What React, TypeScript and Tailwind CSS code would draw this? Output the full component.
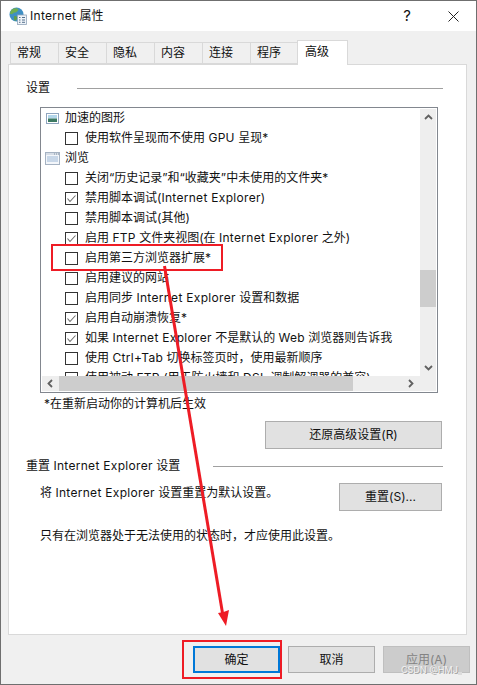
const font = { fontFamily: 'Inter,"Noto Sans CJK SC",sans-serif' };

function T({ s }: { s: string }) {
  const parts = s.split(/([A-Za-z+][A-Za-z+ ]*[A-Za-z+]|[A-Za-z])/);
  return (
    <>
      {parts.map((p, i) =>
        i % 2 === 1 ? (
          <span key={i} className="tracking-[0.3px]">
            {p}
          </span>
        ) : (
          p
        )
      )}
    </>
  );
}

function GlobeIcon() {
  return (
    <svg width="18" height="18" viewBox="0 0 18 18">
      <circle cx="7.500" cy="7.500" r="7" fill="#3f8fc4" />
      <path d="M3 2.500c2-1.500 5-1.800 6-.5 1 1.300-.5 2-1.500 3-.8.800-2.500.300-3.500 1.500C3 7.500 2 7 1 7c0-2 1-3.500 2-4.500z" fill="#6fae4f" />
      <path d="M6 9c1.500 0 2.500 1 2 2.500-.3 1-1 2-2 2.500-1-1-1.500-3-.8-5z" fill="#5f9e4a" />
      <rect x="8.500" y="8" width="9" height="9.500" fill="#eef3f8" stroke="#8fa3b8" strokeWidth="0.800" />
      <path d="M10 10.500h1.500M13 10.500h3M10 13h1.500M13 13h3M10 15.300h1.500M13 15.300h3" stroke="#55708c" strokeWidth="1" />
    </svg>
  );
}

function GraphicsIcon() {
  return (
    <svg width="13" height="13" viewBox="0 0 13 13" className="shrink-0">
      <rect x="0.500" y="1.500" width="12" height="10" fill="#fff" stroke="#8fa5bf" />
      <rect x="2" y="3" width="9" height="3.500" fill="#b3d6ea" />
      <rect x="2" y="6.500" width="9" height="3.500" fill="#3d7a62" />
    </svg>
  );
}

function BrowseIcon() {
  return (
    <svg width="15" height="13" viewBox="0 0 15 13" className="shrink-0">
      <rect x="0.500" y="0.500" width="14" height="12" fill="#f3f6fa" stroke="#a5b2c2" />
      <rect x="1" y="1" width="13" height="2" fill="#d6dde6" />
      <path d="M9 2h1M11 2h1M13 2h1" stroke="#8090a0" strokeWidth="1" />
      <path d="M2 5h11M2 7h11M2 9h11" stroke="#9db8d6" strokeWidth="1" />
    </svg>
  );
}

function Check({ on }: { on?: boolean }) {
  return (
    <span className="w-[13px] h-[13px] border border-[#333333] bg-white shrink-0 flex items-center justify-center">
      {on && (
        <svg width="11" height="11" viewBox="0 0 11 11">
          <path d="M1.500 5.500 4 8.500 9.500 2.500" fill="none" stroke="#6e6e6e" strokeWidth="1.100" />
        </svg>
      )}
    </span>
  );
}

const rows: { t: string; kind: "g" | "b" | "c"; on?: boolean }[] = [
  { t: "加速的图形", kind: "g" },
  { t: "使用软件呈现而不使用 GPU 呈现*", kind: "c" },
  { t: "浏览", kind: "b" },
  { t: "关闭“历史记录”和“收藏夹”中未使用的文件夹*", kind: "c" },
  { t: "禁用脚本调试(Internet Explorer)", kind: "c", on: true },
  { t: "禁用脚本调试(其他)", kind: "c" },
  { t: "启用 FTP 文件夹视图(在 Internet Explorer 之外)", kind: "c", on: true },
  { t: "启用第三方浏览器扩展*", kind: "c" },
  { t: "启用建议的网站", kind: "c" },
  { t: "启用同步 Internet Explorer 设置和数据", kind: "c" },
  { t: "启用自动崩溃恢复*", kind: "c", on: true },
  { t: "如果 Internet Explorer 不是默认的 Web 浏览器则告诉我", kind: "c", on: true },
  { t: "使用 Ctrl+Tab 切换标签页时，使用最新顺序", kind: "c" },
  { t: "使用被动 FTP (用于防火墙和 DSL 调制解调器的兼容)", kind: "c" },
];

const tabs = ["常规", "安全", "隐私", "内容", "连接", "程序"];

function Chevron({ d }: { d: string }) {
  return (
    <svg width="9" height="9" viewBox="0 0 9 9">
      <path d={d} fill="none" stroke="#606060" strokeWidth="1.800" />
    </svg>
  );
}

export default function App() {
  return (
    <div
      className="relative w-[477px] h-[685px] overflow-hidden bg-[#f0f0f0] border border-[#6f6f6f] text-[12px] leading-[20px] text-[#111111] flex flex-col"
      style={font}
    >
      <div className="h-[30px] shrink-0 bg-white flex items-center pl-[8px] pr-[17px]">
        <GlobeIcon />
        <span className="ml-[3px]">
          <T s="Internet 属性" />
        </span>
        <span className="ml-auto text-[15px]">?</span>
        <svg width="11" height="11" viewBox="0 0 11 11" className="ml-[37px]">
          <path d="M.5.500l10 10M10.500.500l-10 10" stroke="#222222" strokeWidth="1" />
        </svg>
      </div>

      <div className="flex items-end pl-[9px] pt-[9px] h-[33px] shrink-0">
        {tabs.map((t) => (
          <div
            key={t}
            className="w-[49px] h-[22px] -mr-px border border-[#d9d9d9] bg-[#f0f0f0] pl-[6px] leading-[20px]"
          >
            {t}
          </div>
        ))}
        <div className="relative z-10 w-[51px] h-[25px] -ml-px -mb-px border border-b-0 border-[#d9d9d9] bg-white pl-[7px] pt-[1px] leading-[20px]">
          高级
        </div>
      </div>

      <div className="ml-[7px] w-[459px] h-[571px] shrink-0 border border-[#d9d9d9] bg-white pt-[13px] pl-[17px] pr-[24px] flex flex-col">
        <div className="flex items-center h-[20px] -mr-px">
          <span>设置</span>
          <div className="ml-[27px] flex-1 h-px bg-[#a0a0a0]" />
        </div>

        <div className="ml-[14px] mr-[4px] mt-[9px] h-[286px] border border-[#82878f] flex flex-col shrink-0">
          <div className="flex flex-1 min-h-0 pl-[1px] pt-[1px] pr-[1px]">
            <div className="flex-1 overflow-hidden -mt-[1px]">
              {rows.map((r) => (
                <div key={r.t} className="h-[20px] flex items-center whitespace-nowrap">
                  {r.kind === "c" ? (
                    <span className="ml-[23px] flex items-center gap-[7px]">
                      <Check on={r.on} />
                      <span>
                        <T s={r.t} />
                      </span>
                    </span>
                  ) : (
                    <span className="ml-[3px] flex items-center gap-[5px]">
                      <span className="w-[15px] flex justify-center">
                        {r.kind === "g" ? <GraphicsIcon /> : <BrowseIcon />}
                      </span>
                      <span>{r.t}</span>
                    </span>
                  )}
                </div>
              ))}
            </div>
            <div className="w-[16px] shrink-0 bg-[#eeeeee] flex flex-col items-center">
              <div className="h-[17px] flex items-center justify-center">
                <Chevron d="M1 6l3.500-3.500L8 6" />
              </div>
              <div className="h-[144px]" />
              <div className="w-full h-[37px] bg-[#cdcdcd]" />
              <div className="flex-1" />
              <div className="h-[17px] flex items-center justify-center">
                <Chevron d="M1 3l3.500 3.500L8 3" />
              </div>
            </div>
          </div>
          <div className="h-[15px] mx-px mb-[1px] shrink-0 bg-[#eeeeee] flex items-center">
            <div className="w-[17px] flex justify-center">
              <Chevron d="M6 1L2.500 4.500 6 8" />
            </div>
            <div className="w-[294px] h-full bg-[#cdcdcd]" />
            <div className="flex-1" />
            <div className="w-[17px] flex justify-center mr-[17px]">
              <Chevron d="M3 1l3.500 3.500L3 8" />
            </div>
          </div>
        </div>

        <div className="ml-[18px] mt-[1px] h-[20px]">*在重新启动你的计算机后生效</div>

        <div className="flex justify-end mt-[7px]">
          <button className="w-[177px] h-[28px] border border-[#adadad] bg-[#e1e1e1] text-[12px]">还原高级设置(R)</button>
        </div>

        <div className="flex items-center h-[20px] mt-[7px] -mr-px">
          <span>
            <T s="重置 Internet Explorer 设置" />
          </span>
          <div className="flex-1 h-px bg-[#a0a0a0] ml-[33px]" />
        </div>

        <div className="flex justify-between mt-[7px] pl-[14px]">
          <span className="whitespace-nowrap">
            <T s="将 Internet Explorer 设置重置为默认设置。" />
          </span>
          <button className="w-[103px] h-[28px] border border-[#adadad] bg-[#e1e1e1] text-[12px]">重置(S)...</button>
        </div>

        <div className="pl-[14px] mt-[15px]">只有在浏览器处于无法使用的状态时，才应使用此设置。</div>
      </div>

      <div className="flex justify-end gap-[8px] pr-[6px] pt-[11px]">
        <button className="w-[87px] h-[27px] border-2 border-[#0078d7] bg-[#e1e1e1] text-[12px]">确定</button>
        <button className="w-[87px] h-[27px] border border-[#adadad] bg-[#e1e1e1] text-[12px]">取消</button>
        <button className="w-[87px] h-[27px] border border-[#bfbfbf] bg-[#cccccc] text-[12px] text-[#838383]">应用(A)</button>
      </div>

      <div className="absolute left-[50px] top-[243px] w-[172px] h-[27px] border-[2px] border-[#ee1c25]" />
      <div className="absolute left-[181px] top-[639px] w-[100px] h-[39px] border-[2px] border-[#ee1c25]" />
      <svg className="absolute left-0 top-0 pointer-events-none" width="477" height="685" viewBox="1 1 477 685">
        <path d="M164.500 266L223 616" stroke="#ee1c25" strokeWidth="3" fill="none" />
        <path d="M226 626L218 613L223.500 612L229 610z" fill="#ee1c25" />
      </svg>
      <span className="absolute left-[400px] top-[662px] text-[9px] leading-[14px] text-[#f2f2f2] [text-shadow:1px_1px_0_#a0a0a0]">CSDN @HMJ</span>
      <span className="absolute left-[457px] top-[671px] w-[4px] h-[3px] bg-[#dcdcdc]" />
    </div>
  );
}
